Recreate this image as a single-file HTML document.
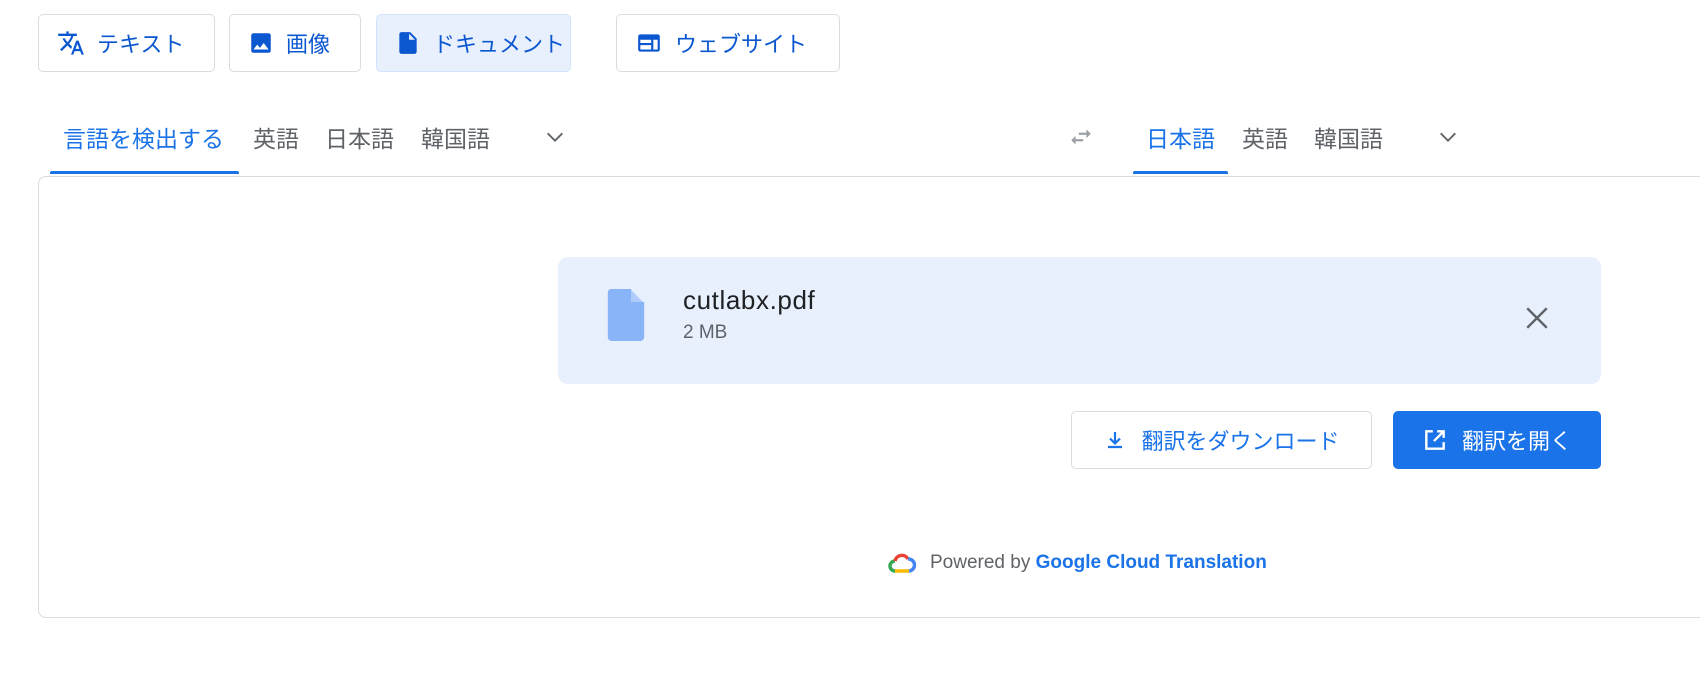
<!DOCTYPE html>
<html><head><meta charset="utf-8"><style>
*{box-sizing:border-box;margin:0;padding:0}
body{width:1700px;height:682px;background:#fff;position:relative;overflow:hidden;font-family:"Liberation Sans","Noto Sans CJK JP",sans-serif;color:#3c4043}
.abs{position:absolute}
.btn{position:absolute;top:14px;height:58px;border:1px solid #dadce0;border-radius:5px;display:flex;align-items:center;padding-left:18px;font-size:22px;color:#0b57d0;background:#fff}
.btn svg{margin-right:12px}
.btn.sel{background:#e8f0fe;border-color:#d2e3fc}
.tab{position:absolute;top:120px;font-size:23px;color:#5f6368}
.tab.on{color:#1a73e8}
.ul{position:absolute;top:171px;height:3px;background:#1a73e8;border-radius:2px 2px 0 0}
</style></head><body>
<div class="btn" style="left:38px;width:177px"><svg width="28" height="28" viewBox="0 0 24 24" fill="#0b57d0"><path d="M12.87 15.07l-2.54-2.51.03-.03A17.5 17.5 0 0014.07 6H17V4h-7V2H8v2H1v2h11.17C11.5 7.92 10.44 9.75 9 11.35 8.07 10.32 7.3 9.19 6.69 8h-2c.73 1.630 1.73 3.17 2.98 4.56l-5.09 5.02L4 19l5-5 3.11 3.11.76-2.04zM18.5 10h-2L12 22h2l1.12-3h4.75L21 22h2l-4.5-12zm-2.62 7l1.62-4.33L19.12 17h-3.24z"/></svg>テキスト</div>
<div class="btn" style="left:229px;width:132px"><svg width="26" height="26" viewBox="0 0 24 24" fill="#0b57d0"><path d="M21 19V5a2 2 0 00-2-2H5a2 2 0 00-2 2v14a2 2 0 002 2h14a2 2 0 002-2zM8.5 13.5l2.5 3 3.5-4.5 4.5 6H5l3.5-4.5z"/></svg>画像</div>
<div class="btn sel" style="left:376px;width:195px"><svg width="26" height="28" viewBox="0 0 24 24" fill="#0b57d0"><path d="M14 2H6a2 2 0 00-2 2v16a2 2 0 002 2h12a2 2 0 002-2V8l-6-6zm-1 7V3.5L18.5 9H13z"/></svg>ドキュメント</div>
<div class="btn" style="left:616px;width:224px"><svg width="28" height="26" viewBox="0 0 24 24" fill="#0b57d0"><path d="M20 4H4a2 2 0 00-2 2v12a2 2 0 002 2h16a2 2 0 002-2V6a2 2 0 00-2-2zM4 9h10v3H4V9zm0 5h10v4H4v-4zm12 4V9h4v9h-4z"/></svg>ウェブサイト</div>

<div class="tab on" style="left:63px">言語を検出する</div>
<div class="tab" style="left:253px">英語</div>
<div class="tab" style="left:325px">日本語</div>
<div class="tab" style="left:421px">韓国語</div>
<svg class="abs" style="left:541px;top:126px" width="28" height="22" viewBox="0 0 24 24"><path d="M4 8l8 8 8-8" fill="none" stroke="#5f6368" stroke-width="2"/></svg>
<div class="ul" style="left:50px;width:189px"></div>

<svg class="abs" style="left:1066px;top:124px" width="30" height="26" viewBox="0 0 24 24" fill="#9aa0a6"><path d="M6.99 11L3 15l3.99 4v-3H14v-2H6.99v-3zM21 9l-3.990-4v3H10v2h7.01v3L21 9z"/></svg>
<div class="tab on" style="left:1146px">日本語</div>
<div class="tab" style="left:1242px">英語</div>
<div class="tab" style="left:1314px">韓国語</div>
<svg class="abs" style="left:1434px;top:126px" width="28" height="22" viewBox="0 0 24 24"><path d="M4 8l8 8 8-8" fill="none" stroke="#5f6368" stroke-width="2"/></svg>
<div class="ul" style="left:1133px;width:95px"></div>

<div class="abs" style="left:38px;top:176px;width:1700px;height:442px;border:1px solid #dadce0;border-radius:8px"></div>

<div class="abs" style="left:558px;top:257px;width:1043px;height:127px;background:#e8f0fe;border-radius:10px"></div>
<svg class="abs" style="left:603px;top:289px" width="46" height="52" viewBox="0 0 16 20"><path d="M2 0h8l5 5v13.5a1.5 1.5 0 01-1.5 1.5h-11A1.5 1.5 0 011 18.5V1.5A1.5 1.5 0 012 0z" fill="#8ab4f8"/><path d="M10 0v5h5z" fill="#e8f0fe"/><path d="M10 .5v4.5h4.5" fill="#8ab4f8" opacity=".6"/></svg>
<div class="abs" style="left:683px;top:285px;font-size:26px;letter-spacing:0.6px;color:#202124">cutlabx.pdf</div>
<div class="abs" style="left:683px;top:322px;font-size:19px;color:#5f6368">2 MB</div>
<svg class="abs" style="left:1524px;top:305px" width="26" height="26" viewBox="0 0 24 24"><path d="M3 3l18 18M21 3L3 21" stroke="#5f6368" stroke-width="2.2"/></svg>

<div class="abs" style="left:1071px;top:411px;width:301px;height:58px;border:1px solid #dadce0;border-radius:5px;display:flex;align-items:center;justify-content:center;font-size:22px;color:#1a73e8"><svg width="24" height="24" viewBox="0 0 24 24" style="margin-right:14px"><path d="M12 4v11M7 10.5l5 5 5-5M5 19h14" fill="none" stroke="#1a73e8" stroke-width="2.2"/></svg>翻訳をダウンロード</div>
<div class="abs" style="left:1393px;top:411px;width:208px;height:58px;background:#1a73e8;border-radius:5px;display:flex;align-items:center;justify-content:center;font-size:22px;color:#fff"><svg width="26" height="26" viewBox="0 0 24 24" style="margin-right:14px"><path d="M10 4H4v16h16v-6M14 4h6v6M20 4l-9 9" fill="none" stroke="#fff" stroke-width="2.2"/></svg>翻訳を開く</div>

<svg class="abs" style="left:888px;top:552px" width="28" height="22" viewBox="0 0 28 22"><path d="M7 19a5 5 0 010-10" fill="none" stroke="#34a853" stroke-width="3.5"/><path d="M7 9a7 7 0 0113-2" fill="none" stroke="#ea4335" stroke-width="3.5"/><path d="M20 7a6 6 0 011 12" fill="none" stroke="#4285f4" stroke-width="3.5"/><path d="M7 19h14" stroke="#fbbc04" stroke-width="3.5"/></svg>
<div class="abs" style="left:930px;top:552px;font-size:19px;color:#5f6368">Powered by <span style="color:#1a73e8;font-weight:bold">Google Cloud Translation</span></div>
</body></html>
